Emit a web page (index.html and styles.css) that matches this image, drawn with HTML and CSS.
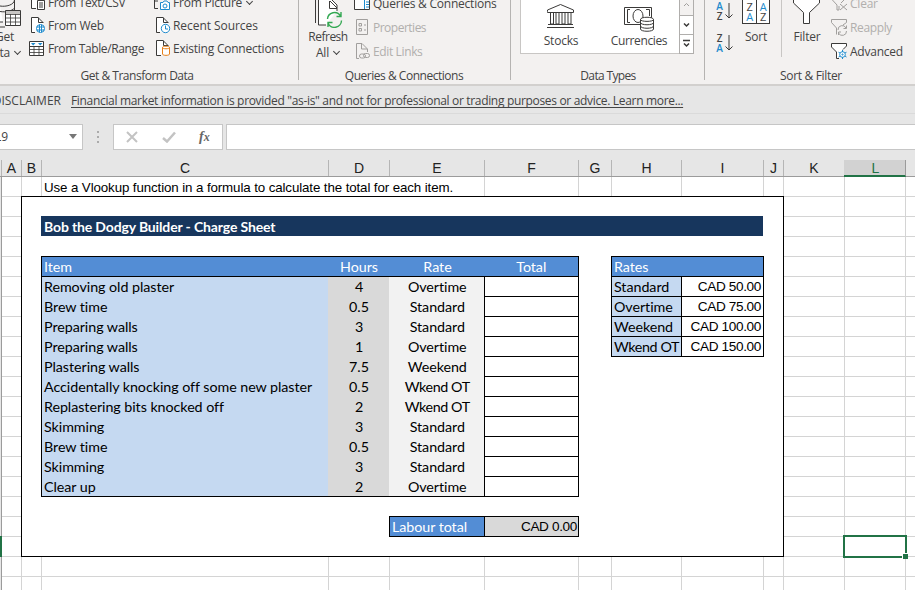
FILE: index.html
```html
<!DOCTYPE html>
<html lang="en">
<head>
<meta charset="utf-8">
<title>Charge Sheet</title>
<link rel="stylesheet" href="styles.css">
</head>
<body>
<div class="app">
  <header class="ribbon">
    <section class="group g-get">
      <div class="tools">
        <div class="big getdata">
          <svg width="22" height="30" viewBox="0 0 22 30"><path class="k fill" d="M-1 1V22H3M0 11.5C6 12.5 12 11 14.500 8V12"/><path class="k" d="M0 6C6 7 14 5 14.500 0M14.500 0V12M0 27H5"/><path class="k fill" d="M5.500 10.500H20.500V25.500H5.500Z"/><path class="gr" d="M6 11H20V14H6Z"/><path class="k thin" d="M5.500 14.500H20.500M5.500 18H20.500M5.500 22H20.500M10.500 14V25M15.500 14V25"/></svg>
          <span>Get</span><span class="dd">Data<i class="chev"></i></span>
        </div>
        <div class="list l1">
          <div class="item"><svg viewBox="28 -6 18 18"><path class="k fill" d="M36 8.500H31.500V-6H39L44 0V2"/><path class="k fill" d="M37.500 .5H44.500V9.500H37.500Z"/><path class="k" d="M39 3H43M39 5H43M39 7H43"/></svg><span class="mid">From Text/CSV</span></div>
          <div class="item"><svg viewBox="28 17 18 18"><path class="k fill" d="M35 32.500H31.500V17.500H38L43.500 23"/><path class="k" d="M38.500 17.500V22.500H43"/><circle class="b fill" cx="40.500" cy="28.500" r="4"/><path class="b" d="M36.500 27H44.500M36.500 30H44.500M39.500 24.500V32.500M41.500 24.500V32.500"/></svg><span>From Web</span></div>
          <div class="item"><svg viewBox="28 39 18 18"><path class="k fill" d="M29.500 40.500H43.500V54.500H29.500Z"/><path class="k" d="M29.500 45.500H43.500"/><path class="k thin" d="M29.500 48.500H43.500M29.500 51.500H43.500M34 45V54M39 45V54"/><path class="bf" d="M31 42H35.500L33.200 44.500ZM38 42H42.500L40.200 44.500Z"/></svg><span class="mid">From Table/Range</span></div>
        </div>
        <div class="list l2">
          <div class="item"><svg viewBox="153 -6 18 18"><path class="k" d="M154.500 -5V8.500H158M154.500 1H158"/><path class="b fill" d="M160.500 2.500H163L164 1H167L168 2.500H169.500V9.500H160.500Z"/><circle class="b" cx="165" cy="6" r="2"/></svg><span>From Picture</span><i class="chev pic"></i></div>
          <div class="item"><svg viewBox="153 17 18 18"><path class="k fill" d="M160 32.500H156.500V17.500H163L168.500 23"/><path class="k" d="M163.500 17.500V22.500H168"/><circle class="b fill" cx="165.500" cy="28.500" r="4.200"/><path class="b" d="M165.500 25.500V29H168"/></svg><span class="wide">Recent Sources</span></div>
          <div class="item"><svg viewBox="153 40 18 18"><path class="k fill" d="M161 55.500H156.500V40.500H163L168.500 46"/><path class="k" d="M163.500 40.500V45.500H168"/><path class="o fill" d="M162.500 47.500C162.500 45.800 169.500 45.800 169.500 47.500V54C169.500 55.800 162.500 55.800 162.500 54Z"/><path class="o" d="M162.500 47.500C162.500 49.200 169.500 49.200 169.500 47.500"/></svg><span>Existing Connections</span></div>
        </div>
      </div>
      <h2>Get &amp; Transform Data</h2>
    </section>
    <section class="group g-query">
      <div class="tools">
        <div class="big refresh">
          <svg width="32" height="30" viewBox="315 -3 32 30"><path class="k" d="M318.500 -3V22"/><path class="k fill" d="M329 24H321.500V-3H333L340 4V10"/><path class="k" d="M332.500 0V7.500H340M333 0L340 7"/><path class="g" d="M330.500 18A7 7 0 0 1 343.500 15M344.500 19.500A7 7 0 0 1 331 22M344 11V15.500H339.500M331 26V21.500H335.500"/></svg>
          <span class="tight">Refresh</span><span class="dd">All<i class="chev"></i></span>
        </div>
        <div class="list l3">
          <div class="item"><svg viewBox="353 -5 18 18"><path class="k fill" d="M354.500 -4.500H369.500V9.500H354.500Z"/><path class="b" d="M364.500 -4V9M366 2H369M366 4.500H369M366 7H369"/></svg><span>Queries &amp; Connections</span></div>
          <div class="item off"><svg viewBox="353 19 18 18"><path class="d" d="M356.500 19.500H367.500V34.500H356.500ZM359 23.500H361.500V26H359ZM359 28.500H361.500V31H359ZM364 25H366M364 30H366"/></svg><span class="tight">Properties</span></div>
          <div class="item off"><svg viewBox="353 43 18 18"><path class="d" d="M359 58.500H356.500V43.500H362L367.500 49V52M361.500 43.500V49H367"/><rect class="d" x="359.500" y="54" width="6" height="4" rx="2"/><rect class="d" x="363.500" y="53.500" width="6" height="4" rx="2"/></svg><span class="mid">Edit Links</span></div>
        </div>
      </div>
      <h2>Queries &amp; Connections</h2>
    </section>
    <section class="group g-types">
      <div class="gallery">
        <div class="type"><svg width="28" height="26" viewBox="547 3 28 26"><path class="k fill" d="M547.500 11.500V10L560.500 4.500L573.500 10V12.500H547.500Z"/><path class="k fill" d="M550.500 13V24H553.500V13M556 13V24H559V13M562 13V24H565V13M568 13V24H571V13M548 24.500H573M547 27.500H574"/></svg><span>Stocks</span></div>
        <div class="type cur"><svg width="32" height="28" viewBox="624 5 32 28"><path class="k fill" d="M625.500 7.500H652.500V24.500H625.500Z"/><path class="k" d="M631 9.500H628.500V22.500H631M647 9.500H650.500V16"/><ellipse class="k" cx="639" cy="16" rx="5" ry="6.500"/><path class="k fill" d="M641.500 19.500C641.500 16.500 654.500 16.500 654.500 19.500V29C654.500 32 641.500 32 641.500 29Z"/><path class="k" d="M641.500 19.500C641.500 22 654.500 22 654.500 19.500M641.500 22.500C641.500 25.500 654.500 25.500 654.500 22.500M641.500 26C641.500 29 654.500 29 654.500 26"/></svg><span class="mid">Currencies</span></div>
        <div class="scroller"><b><svg width="13" height="15" viewBox="0 0 13 15"><path class="d" d="M4 6L6.500 3.500L9 6"/></svg></b><b><svg width="13" height="17" viewBox="0 0 13 17"><path class="k heavy" d="M4 7.500L6.500 10L9 7.500"/></svg></b><b><svg width="13" height="18" viewBox="0 0 13 18"><path class="k heavy" d="M3 5.500H10M4 8.500L6.500 11L9 8.500"/></svg></b></div>
      </div>
      <h2 class="short">Data Types</h2>
    </section>
    <section class="group g-sort">
      <div class="tools">
        <div class="az">
          <div><span><em>A</em><b>Z</b></span><svg width="8" height="18" viewBox="0 0 8 18"><path class="k" d="M4 1V16M.5 12.500L4 16L7.500 12.500"/></svg></div>
          <div><span><b>Z</b><em>A</em></span><svg width="8" height="18" viewBox="0 0 8 18"><path class="k" d="M4 1V16M.5 12.500L4 16L7.500 12.500"/></svg></div>
        </div>
        <div class="sort"><div class="pair"><span><b>Z</b><em>A</em></span><span><em>A</em><b>Z</b></span></div><span>Sort</span></div>
        <div class="filter"><svg width="28" height="28" viewBox="793 -2 28 28"><path class="k fill" d="M793.500 -2V3L803.500 12.500V23.500H809.500V12.500L819.500 3V-2"/></svg><span>Filter</span></div>
        <div class="list l4">
          <div class="item off"><svg viewBox="830 -5 18 18"><path class="d" d="M831.500 -4V-1L837 5V10H839V6M841 3L845 -1V-4M840 4L847 10M847 4L840 10"/></svg><span>Clear</span></div>
          <div class="item off"><svg viewBox="830 19 18 18"><path class="d" d="M836.500 34.500V28L831.500 22.500V19.500H846.500V22.500L843 25M838 30A4.200 4.200 0 0 1 846 28M846.500 31A4.200 4.200 0 0 1 838.500 33M846.500 25.500V28.500H843.500M838.500 35V32H841"/></svg><span class="mid">Reapply</span></div>
          <div class="item"><svg viewBox="830 43 18 18"><path class="k fill" d="M839 58.500H836.500V52L831.500 47V43.500H846.500V46L843 49.500"/><circle class="b fill" cx="842.500" cy="54.500" r="2.800"/><path class="b" d="M842.500 50V52M842.500 57V59M838.500 52.200L840 53M845 56L846.500 57M838.500 57L840 56M845 53L846.500 52.200"/><circle class="b" cx="842.500" cy="54.500" r=".6"/></svg><span>Advanced</span></div>
        </div>
      </div>
      <h2>Sort &amp; Filter</h2>
    </section>
  </header>

  <div class="message"><strong><span>DISCLAIMER</span></strong><a>Financial market information is provided "as-is" and not for professional or trading purposes or advice. Learn more...</a></div>

  <div class="formula">
    <div class="namebox"><span>L9</span><i></i></div>
    <div class="dots"><i></i><i></i><i></i></div>
    <div class="actions">
      <svg width="12" height="12" viewBox="0 0 12 12"><path d="M1 1L11 11M11 1L1 11"/></svg>
      <svg width="14" height="12" viewBox="0 0 14 12"><path class="tick" d="M1 7L5 10.500L13 1.500"/></svg>
      <span>f<small>x</small></span>
    </div>
    <div class="input"></div>
  </div>

  <div class="heads"><span></span><span>A</span><span>B</span><span>C</span><span>D</span><span>E</span><span>F</span><span>G</span><span>H</span><span>I</span><span>J</span><span>K</span><span class="on">L</span><span></span></div>

  <main class="sheet">
    <div class="columns"><i class="rowhead"></i><i></i><i></i><i></i><i></i><i></i><i></i><i></i><i></i><i></i><i></i><i></i><i></i></div>
    <div class="rows"></div>
    <div class="rowsel"></div>
    <p class="note"><span>Use a Vlookup function in a formula to calculate the total for each item.</span></p>
    <div class="card">
      <h1><span>Bob the Dodgy Builder - Charge Sheet</span></h1>
      <div class="tables">
        <div class="left">
          <table class="charges">
            <colgroup><col class="c-item"><col class="c-hours"><col class="c-rate"><col class="c-total"></colgroup>
            <thead><tr><th>Item</th><th>Hours</th><th>Rate</th><th>Total</th></tr></thead>
            <tbody>
              <tr><td>Removing old plaster</td><td>4</td><td>Overtime</td><td></td></tr>
              <tr><td>Brew time</td><td>0.5</td><td>Standard</td><td></td></tr>
              <tr><td>Preparing walls</td><td>3</td><td>Standard</td><td></td></tr>
              <tr><td>Preparing walls</td><td>1</td><td>Overtime</td><td></td></tr>
              <tr><td>Plastering walls</td><td>7.5</td><td>Weekend</td><td></td></tr>
              <tr><td>Accidentally knocking off some new plaster</td><td>0.5</td><td class="wk">Wkend OT</td><td></td></tr>
              <tr><td>Replastering bits knocked off</td><td>2</td><td class="wk">Wkend OT</td><td></td></tr>
              <tr><td>Skimming</td><td>3</td><td>Standard</td><td></td></tr>
              <tr><td>Brew time</td><td>0.5</td><td>Standard</td><td></td></tr>
              <tr><td>Skimming</td><td>3</td><td>Standard</td><td></td></tr>
              <tr><td>Clear up</td><td>2</td><td>Overtime</td><td></td></tr>
            </tbody>
          </table>
          <div class="labour"><span>Labour total</span><span class="money">CAD 0.00</span></div>
        </div>
        <table class="rates">
          <colgroup><col class="c-name"><col class="c-price"></colgroup>
          <thead><tr><th colspan="2">Rates</th></tr></thead>
          <tbody>
            <tr><td>Standard</td><td class="money">CAD 50.00</td></tr>
            <tr><td>Overtime</td><td class="money">CAD 75.00</td></tr>
            <tr><td>Weekend</td><td class="money">CAD 100.00</td></tr>
            <tr><td class="wk">Wkend OT</td><td class="money">CAD 150.00</td></tr>
          </tbody>
        </table>
      </div>
    </div>
    <div class="selected"><i></i></div>
  </main>
</div>
</body>
</html>
```
FILE: styles.css
```css
* { box-sizing: border-box; }
body { margin: 0; background: #fff; }
.app { width: 915px; height: 590px; overflow: hidden; font: 12px/16px "Open Sans", "Noto Sans", sans-serif; color: #444; background: #e6e6e6; }
svg { display: block; flex: none; fill: none; }
em { font-style: normal; color: #1e8bcd; }
span { white-space: nowrap; }

.k { stroke: #3b3a39; } .fill { fill: #fff; } .gr { fill: #c8c6c4; }
.thin { stroke-width: .8; } .heavy { stroke-width: 1.5; }
.b { stroke: #1e8bcd; } .bf { fill: #1e8bcd; }
.o { stroke: #e8811a; } .g { stroke: #33a852; stroke-width: 1.4; } .d { stroke: #a19f9d; }

/* Ribbon */
.ribbon { display: grid; grid-template-columns: 299px 212px 194px 210px; height: 86px; overflow: hidden; background: #f3f1f0; border-bottom: 2px solid #d2d0ce; letter-spacing: -.23px; }
.mid { letter-spacing: -.37px; } .tight { letter-spacing: -.5px; } .wide { letter-spacing: -.06px; }
.group { display: flex; flex-direction: column; justify-content: space-between; height: 80px; border-right: 1px solid #b5b3b1; min-width: 0; }
.g-sort { border-right: 0; }
.group h2 { margin: 0 0 -4px; font: 12px/16px "Open Sans", sans-serif; text-align: center; letter-spacing: -.48px; }
.group .short { letter-spacing: -.65px; padding-left: 1px; }
.g-get h2 { padding-right: 24px; }
.g-query h2 { padding-right: 1px; }
.g-sort h2 { padding-left: 2px; letter-spacing: -.33px; }
.tools { display: flex; height: 64px; }
.big { display: flex; flex-direction: column; align-items: center; }
.big span { line-height: 16px; }
.getdata { width: 22px; align-items: flex-end; margin-right: 6px; }
.getdata svg { margin-bottom: -1px; }
.getdata > span { margin-right: 8px; }
.getdata > .dd { margin-right: 1px; }
.chev { display: inline-block; width: 5px; height: 5px; margin: 0 1px 3px 5px; border: solid #444; border-width: 0 1px 1px 0; transform: rotate(45deg); }
.item .pic { margin-left: 3px; }
.list { display: flex; flex-direction: column; }
.item { display: flex; align-items: center; gap: 2px; height: 23px; }
.item svg { width: 18px; height: 18px; }
.off { color: #b1afad; }
.l1 { width: 125px; margin-top: -9px; }
.l2 { margin-top: -9px; }
.refresh { width: 54px; padding-left: 4px; }
.refresh svg { margin-top: -2px; margin-bottom: 1px; }
.l3, .l4 { margin-top: -8px; }
.l3 .item, .l4 .item { height: 24px; }
.l4 { margin-left: -2px; }
.gallery { display: flex; height: 54px; margin: 0 10px 0 9px; background: #fff; border: solid #c8c6c4; border-width: 0 0 1px 1px; }
.type { width: 80px; display: flex; flex-direction: column; align-items: center; padding-top: 3px; }
.type span { margin-top: 4px; }
.cur { width: 76px; padding-top: 5px; }
.cur span { margin-top: 0; }
.scroller { width: 15px; margin-left: auto; }
.scroller b { display: block; border: 1px solid #b0aeac; border-top: 0; height: 19px; background: #fff; }
.scroller b:first-child { height: 16px; background: #f3f1f0; }
.az { width: 37px; padding-left: 10px; }
.az div { display: flex; gap: 1px; height: 32px; }
.az b, .az em { font-weight: 600; }
.az span { display: flex; flex-direction: column; align-items: center; width: 9px; font: 600 10px/10px "Open Sans", sans-serif; padding-top: 1px; }
.az svg { margin-top: 2px; }
.sort { width: 28px; display: flex; flex-direction: column; align-items: center; }
.pair { display: flex; width: 28px; height: 25px; margin-top: -1px; margin-bottom: 5px; border: 1px solid #3b3a39; background: #fff; }
.pair b { font-weight: 400; }
.pair span { display: flex; flex-direction: column; align-items: center; width: 13px; font: 11px/10px "Open Sans", sans-serif; padding-top: 2px; }
.pair span + span { border-left: 1px solid #3b3a39; }
.filter { width: 51px; height: 57px; margin-left: 11px; border-left: 1px solid #c8c6c4; display: flex; flex-direction: column; align-items: center; }
.filter svg { margin-bottom: 3px; margin-top: -2px; }

/* Message bar */
.message { display: flex; align-items: center; gap: 10px; height: 28px; padding-top: 2px; border-bottom: 1px solid #dadada; }
.message strong { display: flex; justify-content: flex-end; width: 61px; font-weight: 400; overflow: hidden; }
.message a { white-space: nowrap; text-decoration: underline; text-underline-offset: 2px; text-decoration-skip-ink: none; letter-spacing: -.325px; }

/* Formula bar */
.formula { display: flex; align-items: flex-start; height: 46px; padding-top: 10px; }
.namebox, .actions, .input { height: 26px; background: #fff; border: 1px solid #c6c6c6; }
.namebox { width: 83px; display: flex; align-items: center; justify-content: space-between; border-left: 0; padding-right: 5px; }
.namebox span { margin-left: -5px; }
.namebox i { border: 4.500px solid transparent; border-top: 5px solid #777; border-bottom: 0; margin-top: -2px; }
.dots { display: grid; gap: 3px; width: 2px; margin: 7px 14px; }
.dots i { width: 2px; height: 2px; background: #ababab; }
.actions { width: 110px; display: flex; align-items: center; padding-left: 12px; }
.actions svg { stroke: #c3c3c3; stroke-width: 2; }
.actions svg + svg { margin: 0 23px 0 24px; }
.actions .tick { stroke-width: 2.500; }
.actions span { font: italic bold 14px/18px "Liberation Serif", serif; color: #666; }
.actions small { font-size: 12px; }
.input { flex: 1; margin-left: 3px; border-right: 0; }

/* Sheet */
.heads, .sheet, .columns { display: grid; grid-template-columns: 2px 20px 20px 287px 61px 95px 94px 33px 70px 82px 20px 61px 61px 9px; }
.heads { height: 17px; border-bottom: 1px solid #9b9b9b; font: 14px/17px "Liberation Sans", sans-serif; color: #222; text-align: center; }
.heads span { height: 16px; border-right: 1px solid #b5b5b5; }
.heads span:last-child { border: 0; }
.heads .on { height: 17px; margin-left: -1px; padding-left: 2px; color: #217346; background: #d2d2d2; border-bottom: 2px solid #217346; border-right-color: #9b9b9b; }
.sheet { grid-template-rows: repeat(21, 20px); background: #fff; color: #000; }
.columns { grid-row: 1 / -1; grid-column: 1 / -1; }
.columns i { border-right: 1px solid #d4d4d4; }
.columns .rowhead { background: #e6e6e6; border-color: #9b9b9b; }
.rows { grid-row: 1 / -1; grid-column: 2 / -1; background: repeating-linear-gradient(transparent 0 19px, #d4d4d4 19px 20px); }
.rowsel { grid-row: 19; grid-column: 1; background: #217346; margin-top: -1px; }
.note { grid-row: 1; grid-column: 4 / 7; margin: 0 1px 1px 0; padding: 1px 0 0 2px; background: #fff; font: 13.330px/19px "Liberation Sans", sans-serif; letter-spacing: -.11px; }
.card { grid-row: 2 / 20; grid-column: 3 / 12; margin: -1px 0 0 -1px; border: 1px solid #000; background: #fff; padding: 19px 19px 0 19px; }
.card, .card th { font: 14.300px/19px Lato, sans-serif; letter-spacing: -.06px; }
.card h1 { margin: 0; width: 722px; height: 20px; padding: 2px 3px; background: #17365d; color: #fff; font: bold 14px/18px Lato, sans-serif; letter-spacing: -.14px; }
.tables { display: flex; gap: 32px; align-items: flex-start; margin-top: 20px; }
table { border-collapse: collapse; table-layout: fixed; }
.card th, .card td { height: 20px; padding: 1px 0; line-height: 17px; white-space: nowrap; }
.charges, .rates { border: 1px solid #000; }
.charges { width: 538px; } .rates { width: 153px; }
.c-item { width: 286px; } .c-hours { width: 61px; } .c-rate { width: 96px; } .c-total { width: 94px; }
.c-name { width: 70px; } .c-price { width: 82px; }
.card th { background: #538dd5; color: #fff; border-bottom: 1px solid #000; }
.charges th:nth-child(2), .charges th:nth-child(3), .card .charges td { padding-left: 2px; }
.card th:first-child, .charges td:first-child, .rates td:first-child { text-align: left; padding-left: 2px; background-color: #c5d9f1; }
.card th:first-child { background: #538dd5; }
.charges td { text-align: center; }
.charges td:nth-child(2) { background: #d9d9d9; }
.charges td:nth-child(3) { background: #f2f2f2; }
.charges td:nth-child(4), .rates td { border: 1px solid #000; }
.card .wk { letter-spacing: -.4px; }
.card .money { font: 13.600px/17px "Liberation Sans", sans-serif; letter-spacing: -.36px; text-align: right; padding-right: 2px; }
.labour { display: grid; grid-template-columns: 94px 94px; grid-template-rows: 19px; width: 190px; height: 21px; margin: 19px 0 0 348px; border: 1px solid #000; }
.labour span { padding: 1px 0 0 2px; background: #538dd5; color: #fff; line-height: 18px; }
.labour .money { color: #000; background: #d9d9d9; border-left: 1px solid #000; padding-top: 1px; padding-right: 1px; }
.selected { grid-row: 19; grid-column: 13; position: relative; margin: -2px -1px -1px -2px; border: 2px solid #217346; }
.selected i { position: absolute; right: -3px; bottom: -3px; width: 6px; height: 6px; background: #217346; border: solid #fff; border-width: 1px 0 0 1px; }
```
